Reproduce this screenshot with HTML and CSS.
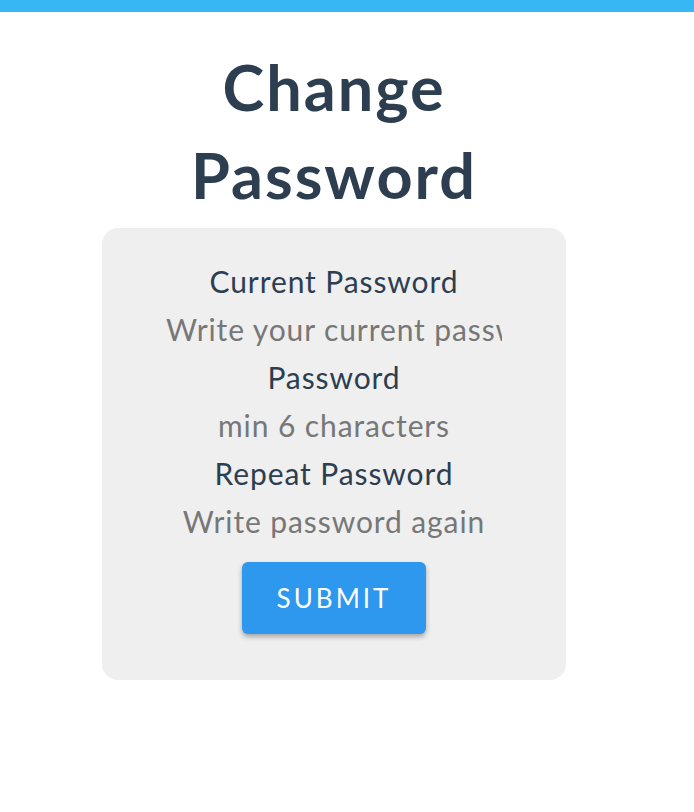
FILE: index.html
```html
<!doctype html>
<html>
<head>
    <meta charset="utf-8">
    <title>Change Password</title>
    <link rel="stylesheet" href="styles.css">
</head>
<body>
<div class="topbar"></div>
<div id="app">
    <h1 class="title">Change Password</h1>
    <form class="card">
        <label class="label" for="current">Current Password</label>
        <input class="field" id="current" type="password" placeholder="Write your current password">
        <label class="label" for="password">Password</label>
        <input class="field" id="password" type="password" placeholder="min 6 characters">
        <label class="label" for="repeat">Repeat Password</label>
        <input class="field" id="repeat" type="password" placeholder="Write password again">
        <button class="submit" type="button">Submit</button>
    </form>
</div>
</body>
</html>
```

FILE: styles.css
```css
html {
    background-color: #fff;
}

body {
    margin: 0;
    font-family: Lato, "Open Sans", Arial, sans-serif;
    color: #2c3e50;
}

.topbar {
    height: 12px;
    background-color: #37b8f4;
}

#app {
    width: 668px;
    text-align: center;
}

.title {
    width: 464px;
    margin: 0 auto;
    padding-top: 31px;
    padding-bottom: 9px;
    font-size: 63px;
    font-weight: bold;
    letter-spacing: 2px;
    line-height: 88px;
}

.card {
    width: 464px;
    margin: 0 auto;
    padding: 29px 0 46px;
    box-sizing: border-box;
    background-color: #efefef;
    border-radius: 16px;
}

.label {
    display: block;
    height: 48px;
    font-size: 30px;
    letter-spacing: 0.9px;
    line-height: 48px;
}

.field {
    display: block;
    width: 336px;
    height: 48px;
    margin: 0 auto;
    padding: 0;
    border: none;
    background: transparent;
    font-family: inherit;
    font-size: 30px;
    letter-spacing: 0.9px;
    text-align: center;
    color: #2c3e50;
    outline: none;
}

.field::placeholder {
    color: #777;
}

.submit {
    margin-top: 17px;
    width: 184px;
    height: 72px;
    border: none;
    border-radius: 6px;
    background-color: #2d98ee;
    color: #fff;
    font-family: inherit;
    font-size: 26px;
    letter-spacing: 3px;
    text-transform: uppercase;
    box-shadow: 0 3px 5px rgba(0, 0, 0, 0.3);
}
```
